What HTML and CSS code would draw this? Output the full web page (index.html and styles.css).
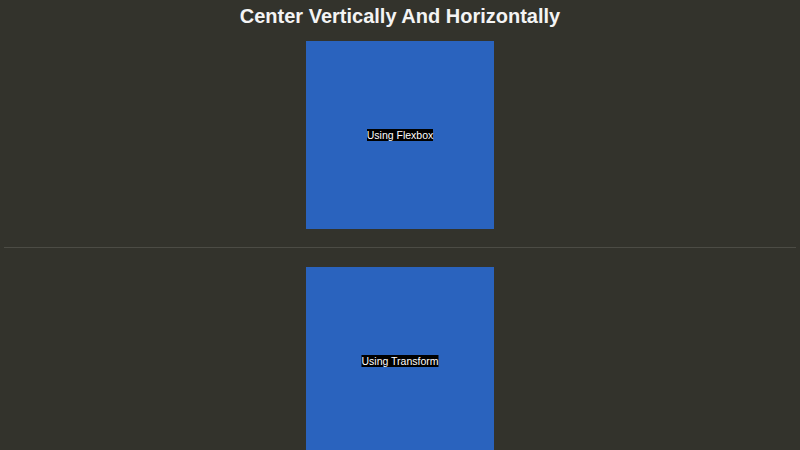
FILE: index.html
```html
<!DOCTYPE html>
<html>
<head>
<meta charset="utf-8">
<link rel="stylesheet" href="styles.css">
</head>
<body>
<h1 class="title">Center Vertically And Horizontally</h1>
<section class="demo">
  <div class="box box-flex"><span class="label">Using Flexbox</span></div>
</section>
<hr class="divider">
<section class="demo">
  <div class="box box-transform"><span class="label label-abs">Using Transform</span></div>
</section>
</body>
</html>
```
FILE: styles.css
```css
html, body {
  margin: 0;
  padding: 0;
  background: #33332c;
  height: 100%;
  overflow: hidden;
}
body {
  padding: 0 4px;
  font-family: "Liberation Sans", Arial, sans-serif;
  color: #ffffff;
}
.title {
  margin: 4px 0 13px;
  font-size: 20px;
  line-height: 24px;
  font-weight: bold;
  text-align: center;
  color: #f4f4f4;
}
.demo {
  display: flex;
  justify-content: center;
}
.box {
  width: 188px;
  height: 188px;
  background: #2a63be;
}
.box-flex {
  display: flex;
  align-items: center;
  justify-content: center;
}
.box-transform {
  position: relative;
}
.label {
  background: #000000;
  color: #ffffff;
  font-size: 10.5px;
  line-height: 12px;
  padding: 0;
}
.label-abs {
  position: absolute;
  left: 50%;
  top: 50%;
  transform: translate(-50%, -50%);
  white-space: nowrap;
}
.divider {
  margin: 18px 0 19px;
  border: 0;
  border-top: 1px solid #4c4c45;
  height: 0;
}
```
